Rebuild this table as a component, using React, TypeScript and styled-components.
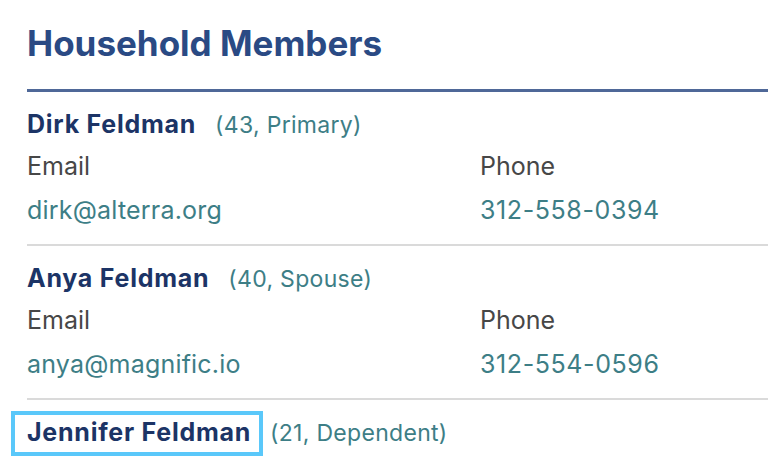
import React from "react";
import styled, { createGlobalStyle } from "styled-components";

const Global = createGlobalStyle`
  html, body { margin: 0; padding: 0; background: #ffffff; }
  body { font-family: Inter, "Noto Sans", sans-serif; }
`;

const Page = styled.div`
  padding: 22px 0 0 27px;
`;

const Title = styled.h1`
  margin: 0;
  font-size: 35px;
  font-weight: 700;
  color: #2a4a84;
  line-height: 42px;
  padding-bottom: 25px;
  border-bottom: 3px solid #4f6898;
`;

const Member = styled.section<{ $last?: boolean }>`
  padding: 17px 0 19px;
  border-bottom: ${(p) => (p.$last ? "none" : "2px solid #dadada")};
`;

const NameRow = styled.div`
  display: flex;
  align-items: baseline;
  gap: 19px;
`;

const Name = styled.span<{ $focused?: boolean }>`
  font-size: 25px;
  font-weight: 700;
  letter-spacing: 0.75px;
  color: #1c3466;
  line-height: 30px;
  ${(p) =>
    p.$focused
      ? `
    padding: 2px 8px 5px 12px;
    margin: -2px -8px -5px -12px;
    outline: 4px solid #5ac8fa;
  `
      : ""}
`;

const Meta = styled.span`
  font-size: 23px;
  letter-spacing: 0.3px;
  color: #3d7e86;
`;

const Grid = styled.div`
  display: grid;
  grid-template-columns: 453px 1fr;
  row-gap: 14px;
  margin-top: 12px;
`;

const Label = styled.div`
  font-size: 25px;
  color: #474747;
  line-height: 30px;
`;

const Value = styled.div<{ $numeric?: boolean }>`
  font-size: 25px;
  letter-spacing: ${(p) => (p.$numeric ? "0.6px" : "0.2px")};
  color: #3d7e86;
  line-height: 30px;
`;

type M = { name: string; meta: string; email?: string; phone?: string; focused?: boolean };

const members: M[] = [
  { name: "Dirk Feldman", meta: "(43, Primary)", email: "dirk@alterra.org", phone: "312-558-0394" },
  { name: "Anya Feldman", meta: "(40, Spouse)", email: "anya@magnific.io", phone: "312-554-0596" },
  { name: "Jennifer Feldman", meta: "(21, Dependent)", focused: true },
];

export default function App() {
  return (
    <Page>
      <Global />
      <Title>Household Members</Title>
      {members.map((m, i) => (
        <Member key={m.name} $last={i === members.length - 1}>
          <NameRow>
            <Name $focused={m.focused}>{m.name}</Name>
            <Meta>{m.meta}</Meta>
          </NameRow>
          {m.email && (
            <Grid>
              <Label>Email</Label>
              <Label>Phone</Label>
              <Value>{m.email}</Value>
              <Value $numeric>{m.phone}</Value>
            </Grid>
          )}
        </Member>
      ))}
    </Page>
  );
}
